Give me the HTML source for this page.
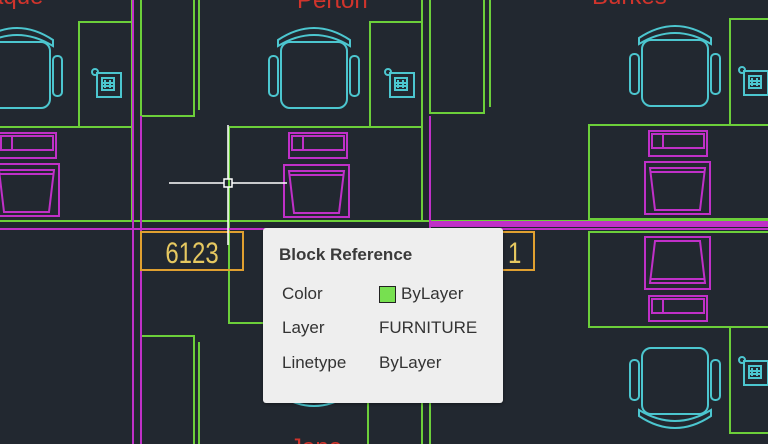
<!DOCTYPE html>
<html><head><meta charset="utf-8"><style>
html,body{margin:0;padding:0;background:#222830;overflow:hidden;width:768px;height:444px}
.w{position:relative;width:768px;height:444px;overflow:hidden;background:#222830;font-family:"Liberation Sans",sans-serif}
svg{position:absolute;left:0;top:0}
.tip{position:absolute;left:263px;top:228px;width:240px;height:175px;background:#eeeeee;border-radius:3px;box-shadow:0 1px 3px rgba(0,0,0,.4);color:#333;font-size:17px}
.tip div{position:absolute;white-space:nowrap}
</style></head><body><div class="w">
<svg width="768" height="444" viewBox="0 0 768 444">
<defs>
<g id="chair" fill="none" stroke="#4cc6cf" stroke-width="2">
<path d="M-36,-28 Q0,-52 36,-28 L36,-22 Q0,-44 -36,-22 Z"/>
<rect x="-33" y="-26" width="66" height="66" rx="9"/>
<rect x="-45" y="-12" width="9" height="40" rx="4"/>
<rect x="36" y="-12" width="9" height="40" rx="4"/>
</g>
<g id="kb" fill="none" stroke="#c030c8" stroke-width="2">
<rect x="0" y="0" width="58" height="25"/><rect x="3" y="3" width="52" height="14"/><line x1="14" y1="3" x2="14" y2="17"/>
</g>
<g id="mon" fill="none" stroke="#c030c8" stroke-width="2">
<rect x="0" y="0" width="65" height="52"/><path d="M5,6 L60,6 L55,48 L10,48 Z"/><line x1="5" y1="10" x2="60" y2="10"/>
</g>
<g id="ph" fill="none" stroke="#4cc6cf" stroke-width="2">
<rect x="4" y="4" width="24" height="24"/><rect x="9" y="9" width="12" height="12"/><path d="M12,11v8M17,11v8M10,14h10M10,17h10"/><circle cx="2" cy="3" r="3"/>
</g>
</defs>
<g fill="none" stroke="#6ccf3a" stroke-width="2">
<path d="M132,0V222M141,0V116H194V0M199,0V110"/>
<path d="M79,127V22H132M0,127H132"/>
<path d="M229,127H422M370,127V22H422M422,0V222M430,0V113H484V0M490,0V107"/>
<path d="M229,127V323H263"/>
<path d="M0,221H768"/>
<rect x="589" y="125" width="190" height="94"/>
<path d="M730,125V19H768"/>
<rect x="589" y="232" width="190" height="95"/>
<path d="M730,327V433H768"/>
<path d="M141,444V336H194V444M199,444V342"/>
<path d="M368,444V403"/>
<path d="M422,229V444M430,229V444"/>
</g>
<g fill="none" stroke="#c030c8" stroke-width="2">
<path d="M133,0V444M141,116V444M0,229H768M430,116V229M430,226H768"/>
</g>
<path d="M430,223H768" stroke="#c030c8" stroke-width="4"/>
<rect x="141" y="232" width="102" height="38" fill="none" stroke="#e0a030" stroke-width="2"/>
<text x="0" y="0" fill="#e6c860" font-size="30" text-anchor="middle" transform="translate(192,263) scale(0.8,1)">6123</text>
<rect x="480" y="232" width="54" height="38" fill="none" stroke="#e0a030" stroke-width="2"/>
<text x="0" y="0" fill="#e6c860" font-size="30" transform="translate(508,263) scale(0.8,1)">1</text>
<g fill="#d0342c" font-size="24">
<text x="-10" y="4">aque</text><text x="297" y="8">Perton</text><text x="592" y="4">Burkes</text><text x="290" y="455">Jane</text>
</g>
<use href="#chair" x="17" y="68"/>
<use href="#chair" x="314" y="68"/>
<use href="#chair" x="675" y="66"/>
<g transform="translate(675,388) scale(1,-1)"><use href="#chair"/></g>
<g transform="translate(314,366) scale(1,-1)"><use href="#chair"/></g>
<use href="#kb" x="-2" y="133"/><use href="#mon" x="-6" y="164"/>
<use href="#kb" x="289" y="133"/><use href="#mon" x="284" y="165"/>
<use href="#kb" x="649" y="131"/><use href="#mon" x="645" y="162"/>
<g transform="translate(645,289) scale(1,-1)"><use href="#mon"/></g>
<use href="#kb" x="649" y="296"/>
<use href="#ph" x="93" y="69"/><use href="#ph" x="386" y="69"/><use href="#ph" x="740" y="67"/><use href="#ph" x="740" y="357"/>
<g stroke="#ffffff" stroke-width="1.5" fill="none">
<path d="M169,183H224M232,183H287M228,125V179M228,187V245"/><rect x="224" y="179" width="8" height="8"/>
</g>
</svg>
<div class="tip">
<div style="left:16px;top:17px;font-weight:bold;color:#3a3a3a">Block Reference</div>
<div style="left:19px;top:56px">Color</div>
<div style="left:116px;top:58px;width:15px;height:15px;background:#77e050;border:1px solid #222"></div>
<div style="left:138px;top:56px">ByLayer</div>
<div style="left:19px;top:90px">Layer</div><div style="left:116px;top:90px">FURNITURE</div>
<div style="left:19px;top:125px">Linetype</div><div style="left:116px;top:125px">ByLayer</div>
</div>
</div></body></html>
